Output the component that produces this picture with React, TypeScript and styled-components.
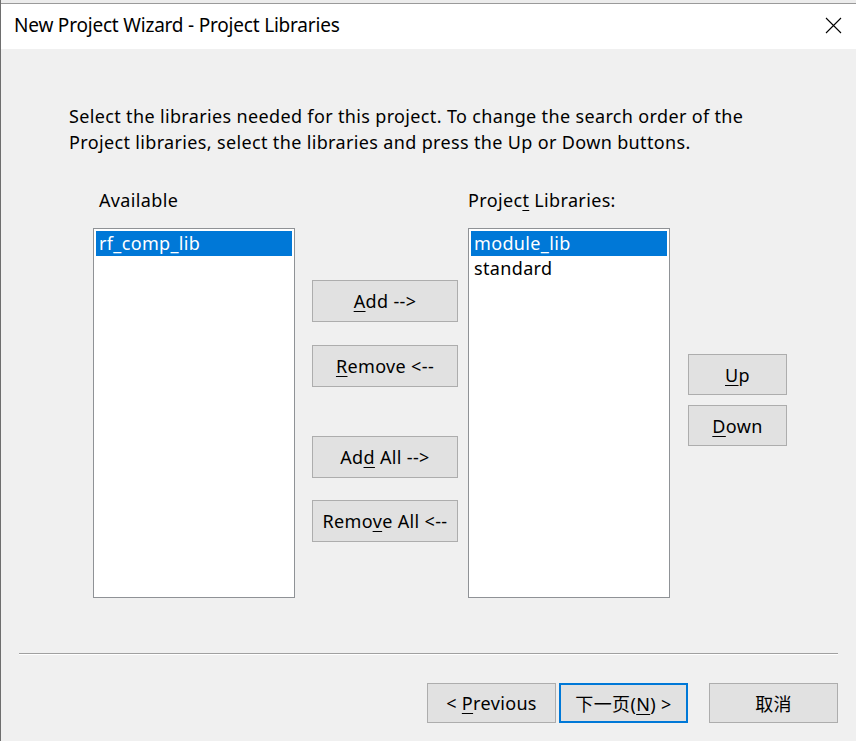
import React from "react";
import styled, { createGlobalStyle } from "styled-components";

const Global = createGlobalStyle`
  html, body { margin: 0; padding: 0; background: #f0f0f0; }
  body { font-family: "Noto Sans", "Noto Sans CJK SC", sans-serif; }
  * { box-sizing: border-box; }
`;

const Win = styled.div`
  width: 856px;
  height: 741px;
  display: flex;
  flex-direction: column;
  border-left: 1px solid #6e6e6e;
  background: #f0f0f0;
  overflow: hidden;
`;

const BackStrip = styled.div`
  height: 4px;
  flex: none;
  overflow: hidden;
  background: #ececec;
  border-bottom: 1px solid #9a9a9a;
  padding-left: 286px;
`;

const BackMenu = styled.div`
  display: inline-flex;
  gap: 26px;
  margin-top: -12px;
  height: 15px;
  font-size: 14px;
  line-height: 15px;
  color: #8a8a8a;
  padding-right: 8px;
  border-right: 1px solid #9a9a9a;
  overflow: hidden;
`;

const TitleBar = styled.div`
  height: 45px;
  flex: none;
  background: #ffffff;
  display: flex;
  align-items: center;
  justify-content: space-between;
  padding-left: 13px;
  padding-right: 14px;
  padding-bottom: 3px;
`;

const Title = styled.div`
  font-family: "Noto Sans", sans-serif;
  font-size: 19px;
  color: #000;
  letter-spacing: -0.2px;
`;

const Close = styled.div`
  width: 18px;
  height: 18px;
  display: flex;
  align-items: center;
  justify-content: center;
`;

const Body = styled.div`
  flex: 1;
  display: flex;
  flex-direction: column;
  padding: 54px 18px 0 18px;
  font-size: 18px;
  letter-spacing: 0.35px;
`;

const Desc = styled.div`
  padding-left: 50px;
  line-height: 26px;
  color: #000;
`;

const Columns = styled.div`
  display: flex;
  align-items: flex-start;
  margin-top: 32px;
  padding-left: 74px;
`;

const Col = styled.div<{ $ml?: number; $pt?: number }>`
  display: flex;
  flex-direction: column;
  margin-left: ${(p) => p.$ml ?? 0}px;
  padding-top: ${(p) => p.$pt ?? 0}px;
`;

const Label = styled.div<{ $indent?: number }>`
  height: 26px;
  line-height: 26px;
  color: #000;
  padding-left: ${(p) => p.$indent ?? 0}px;
  margin-bottom: 15px;
  u { text-underline-offset: 3px; }
`;

const ListBox = styled.div`
  width: 202px;
  height: 370px;
  background: #fff;
  border: 1px solid #8f9296;
  padding: 2px;
  display: flex;
  flex-direction: column;
`;

const Item = styled.div<{ $sel?: boolean }>`
  height: 25px;
  line-height: 25px;
  padding-left: 3px;
  color: ${(p) => (p.$sel ? "#fff" : "#000")};
  background: ${(p) => (p.$sel ? "#0078d7" : "transparent")};
`;

const Btn = styled.div<{ $w: number; $h: number; $focus?: boolean; $mt?: number }>`
  width: ${(p) => p.$w}px;
  height: ${(p) => p.$h}px;
  margin-top: ${(p) => p.$mt ?? 0}px;
  background: #e1e1e1;
  border: ${(p) => (p.$focus ? "2px solid #0078d7" : "1px solid #adadad")};
  display: flex;
  align-items: center;
  justify-content: center;
  color: #000;
  white-space: pre;
  u { text-underline-offset: 3px; text-decoration-thickness: 1px; }
`;

const Separator = styled.div`
  margin-top: 55px;
  height: 2px;
  border-top: 1px solid #a0a0a0;
  border-bottom: 1px solid #ffffff;
`;

const Footer = styled.div`
  display: flex;
  justify-content: flex-end;
  margin-top: 28px;
  gap: 3px;
`;

const FooterGap = styled.div`
  width: 15px;
`;

export default function App() {
  return (
    <>
      <Global />
      <Win>
        <BackStrip>
          <BackMenu>
            <span>File</span>
            <span>View</span>
            <span>Tools</span>
            <span>Options</span>
            <span>Sketch</span>
            <span>Tools</span>
            <span>Help</span>
          </BackMenu>
        </BackStrip>
        <TitleBar>
          <Title>New Project Wizard - Project Libraries</Title>
          <Close>
            <svg width="17" height="17" viewBox="0 0 17 17">
              <path d="M1 1 L16 16 M16 1 L1 16" stroke="#000" strokeWidth="1.1" fill="none" />
            </svg>
          </Close>
        </TitleBar>
        <Body>
          <Desc>
            Select the libraries needed for this project. To change the search order of the
            <br />
            Project libraries, select the libraries and press the Up or Down buttons.
          </Desc>
          <Columns>
            <Col>
              <Label $indent={6}>Available</Label>
              <ListBox>
                <Item $sel>rf_comp_lib</Item>
              </ListBox>
            </Col>
            <Col $ml={17} $pt={93}>
              <Btn $w={146} $h={42}>
                <span><u>A</u>dd --&gt;</span>
              </Btn>
              <Btn $w={146} $h={42} $mt={23}>
                <span><u>R</u>emove &lt;--</span>
              </Btn>
              <Btn $w={146} $h={42} $mt={49}>
                <span>Ad<u>d</u> All --&gt;</span>
              </Btn>
              <Btn $w={146} $h={42} $mt={22}>
                <span>Remo<u>v</u>e All &lt;--</span>
              </Btn>
            </Col>
            <Col $ml={10}>
              <Label>
                Projec<u>t</u> Libraries:
              </Label>
              <ListBox>
                <Item $sel>module_lib</Item>
                <Item>standard</Item>
              </ListBox>
            </Col>
            <Col $ml={18} $pt={167}>
              <Btn $w={99} $h={41}>
                <span><u>U</u>p</span>
              </Btn>
              <Btn $w={99} $h={41} $mt={10}>
                <span><u>D</u>own</span>
              </Btn>
            </Col>
          </Columns>
          <Separator />
          <Footer>
            <Btn $w={129} $h={40}>
              <span>&lt; <u>P</u>revious</span>
            </Btn>
            <Btn $w={129} $h={40} $focus>
              <span>下一页(<u>N</u>) &gt;</span>
            </Btn>
            <FooterGap />
            <Btn $w={129} $h={40}>
              <span>取消</span>
            </Btn>
          </Footer>
        </Body>
      </Win>
    </>
  );
}
